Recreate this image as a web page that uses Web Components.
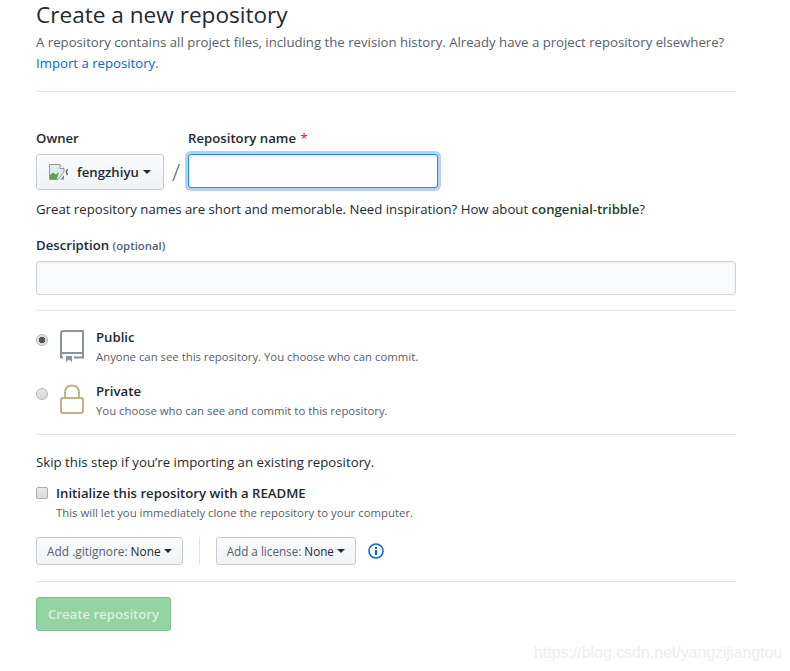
<!DOCTYPE html>
<html lang="en">

<head>
    <meta charset="UTF-8">
    <title>Create a new repository</title>
    <style>
        html, body {
            margin: 0;
            background: #fff;
            color: #24292e;
            font-family: "Open Sans", "Liberation Sans", sans-serif;
            font-size: 14px;
        }
    </style>
</head>

<body>
    <repo-form></repo-form>

    <script>
        class GhRule extends HTMLElement {
            constructor() {
                super();
                this.attachShadow({ mode: 'open' });
                this.shadowRoot.innerHTML = `
                <style>
                    :host { display: block; height: 1px; background: #e1e4e8; }
                </style>`;
            }
        }

        class GhSelect extends HTMLElement {
            constructor() {
                super();
                this.attachShadow({ mode: 'open' });
                this.shadowRoot.innerHTML = `
                <style>
                    :host {
                        display: inline-flex;
                        align-items: center;
                        box-sizing: border-box;
                        height: 28px;
                        padding: 0 10px;
                        gap: 3px;
                        border: 1px solid #c8ccd1;
                        border-radius: 3px;
                        background: linear-gradient(#fafbfc, #eff3f6);
                        font-size: 11.7px;
                        font-weight: 500;
                        color: #24292e;
                        white-space: nowrap;
                    }
                    .caret {
                        width: 0;
                        height: 0;
                        border: 4px solid transparent;
                        border-top-color: #24292e;
                        border-bottom-width: 0;
                    }
                    ::slotted(span) { color: #586069; font-weight: 400; }
                </style>
                <slot></slot><span class="caret"></span>`;
            }
        }

        class GhRadio extends HTMLElement {
            constructor() {
                super();
                this.attachShadow({ mode: 'open' });
                const checked = this.hasAttribute('checked');
                this.shadowRoot.innerHTML = `
                <style>
                    :host { display: flex; height: 54px; }
                    .radio {
                        box-sizing: border-box;
                        width: 12px;
                        height: 12px;
                        margin: 4px 12px 0 0;
                        border: 1px solid #b4b4b4;
                        border-radius: 50%;
                        background: ${checked ? 'radial-gradient(circle, #555 0 3px, #e4e4e4 3.6px)' : 'linear-gradient(#e8e8e8, #d8d8d8)'};
                    }
                    .icon { width: 24px; height: 32px; margin: 0 12px 0 0; }
                    .title { font-weight: 600; font-size: 13.2px; line-height: 16px; margin-top: -1px; }
                    .note { font-size: 11.35px; line-height: 16px; color: #586069; margin-top: 4px; white-space: nowrap; }
                </style>
                <div class="radio"></div>
                <div class="icon"><slot name="icon"></slot></div>
                <div>
                    <div class="title">${this.getAttribute('label')}</div>
                    <div class="note">${this.getAttribute('note')}</div>
                </div>`;
            }
        }

        class RepoForm extends HTMLElement {
            constructor() {
                super();
                this.attachShadow({ mode: 'open' });
                this.shadowRoot.innerHTML = `
                <style>
                    :host {
                        display: block;
                        position: relative;
                        box-sizing: border-box;
                        width: 790px;
                        height: 671px;
                        overflow: hidden;
                        padding-left: 36px;
                    }
                    .wrap { width: 700px; }
                    h1 {
                        margin: 0;
                        font-size: 22.6px;
                        font-weight: 400;
                        line-height: 30px;
                    }
                    .lead {
                        margin: 2px 0 17px;
                        font-size: 13.2px;
                        line-height: 21px;
                        color: #586069;
                        white-space: nowrap;
                    }
                    a { color: #0366d6; text-decoration: none; }
                    .lbl { font-weight: 600; font-size: 13.2px; line-height: 20px; display: block; white-space: nowrap; }
                    .names { display: flex; margin-top: 36px; }
                    .owner-box {
                        display: flex;
                        align-items: center;
                        box-sizing: border-box;
                        width: 128px;
                        height: 36px;
                        margin-top: 6px;
                        padding: 0 0 1px 12px;
                        border: 1px solid #c8ccd1;
                        border-radius: 3px;
                        background: linear-gradient(#fafbfc, #eff3f6);
                        font-weight: 600;
                        font-size: 13.2px;
                        white-space: nowrap;
                    }
                    .owner-box svg { margin-right: 8px; flex: none; }
                    .caret {
                        margin-left: 4px;
                        border: 4px solid transparent;
                        border-top-color: #24292e;
                        border-bottom-width: 0;
                    }
                    .slash { width: 24px; text-align: center; font-size: 24px; line-height: 36px; margin-top: 26px; color: #586069; font-weight: 300; }
                    .req { color: #cb2431; font-weight: 400; margin-left: 1px; }
                    .name-input {
                        box-sizing: border-box;
                        width: 250px;
                        height: 34px;
                        margin-top: 6px;
                        border: 1px solid #2188ff;
                        border-radius: 3px;
                        background: #fff;
                        box-shadow: 0 0 0 3px rgba(3, 102, 214, 0.3);
                    }
                    .hint { margin: 9px 0 0; font-size: 13.2px; line-height: 20px; white-space: nowrap; }
                    .hint b { font-weight: 600; color: #28402a; }
                    .desc { margin-top: 16px; }
                    .lbl small { font-size: 11.35px; color: #586069; }
                    .desc-input {
                        box-sizing: border-box;
                        height: 34px;
                        margin-top: 5px;
                        border: 1px solid #d1d5da;
                        border-radius: 3px;
                        background: #fafbfc;
                        box-shadow: inset 0 1px 2px rgba(27, 31, 35, 0.075);
                    }
                    .r1 { margin-top: 15px; }
                    .options { padding-top: 19px; }
                    .options gh-radio:last-child { height: 50px; }
                    .skip { margin: 17px 0 0; font-size: 13.25px; line-height: 20px; }
                    .readme { display: flex; margin-top: 11px; }
                    .check {
                        box-sizing: border-box;
                        width: 12px;
                        height: 12px;
                        margin: 4px 8px 0 0;
                        border: 1px solid #aaa;
                        border-radius: 2px;
                        background: linear-gradient(#eaeaea, #dcdcdc);
                    }
                    .readme .note { font-size: 11.38px; line-height: 16px; margin-top: 2px; color: #586069; white-space: nowrap; }
                    .picks { display: flex; align-items: center; margin-top: 16px; height: 28px; }
                    .sep { width: 1px; height: 28px; background: #e1e4e8; margin: 0 16px; }
                    .picks svg { margin-left: 12px; }
                    .ignore { font-size: 11.9px; }
                    .bottom { margin-top: 16px; }
                    .create {
                        display: flex;
                        align-items: center;
                        justify-content: center;
                        box-sizing: border-box;
                        width: 135px;
                        height: 34px;
                        margin-top: 15px;
                        border: 1px solid #7fbf91;
                        border-radius: 3px;
                        background: #94d3a2;
                        color: #d9f0de;
                        font-weight: 600;
                        font-size: 13.2px;
                    }
                    .mark {
                        position: absolute;
                        left: 534px;
                        top: 643px;
                        font-family: "Liberation Sans", sans-serif;
                        font-size: 15.9px;
                        line-height: 20px;
                        color: #eeeeee;
                        white-space: nowrap;
                    }
                </style>
                <div class="wrap">
                    <h1>Create a new repository</h1>
                    <p class="lead">A repository contains all project files, including the revision history. Already have a project repository elsewhere?<br><a>Import a repository</a>.</p>
                    <gh-rule></gh-rule>

                    <div class="names">
                        <div>
                            <div class="lbl">Owner</div>
                            <div class="owner-box">
                                <svg width="20" height="16" viewBox="0 0 20 16">
                                    <path d="M0.5 0.5H11L15 4.5V8L9 15.5H0.5Z" fill="#e3ebef" stroke="#8f9aa0"/>
                                    <path d="M1 15V11L4 8.5L7 10.5L10 8L8 15Z" fill="#5aa642"/>
                                    <path d="M11 15.5H15V11L12 15Z" fill="#5aa642"/>
                                    <path d="M11 .5V4.5H15" fill="#fff" stroke="#8f9aa0"/>
                                    <path d="M18.5 5Q16.5 8 18.5 11" fill="none" stroke="#555" stroke-width="1.2"/>
                                </svg>
                                fengzhiyu<span class="caret"></span>
                            </div>
                        </div>
                        <div class="slash">/</div>
                        <div>
                            <div class="lbl">Repository name <span class="req">*</span></div>
                            <div class="name-input"></div>
                        </div>
                    </div>
                    <p class="hint">Great repository names are short and memorable. Need inspiration? How about <b>congenial-tribble</b>?</p>

                    <div class="desc">
                        <div class="lbl">Description <small>(optional)</small></div>
                        <div class="desc-input"></div>
                    </div>
                    <gh-rule class="r1"></gh-rule>

                    <div class="options">
                        <gh-radio checked label="Public" note="Anyone can see this repository. You choose who can commit.">
                            <svg slot="icon" width="24" height="32" viewBox="0 0 24 32">
                                <path d="M3 27.5H1V3.5Q1 1 3.5 1H23V27.5H14" fill="none" stroke="#8a949c" stroke-width="2"/>
                                <path d="M1 24.5Q1 23 3 23H23" fill="none" stroke="#8a949c" stroke-width="2"/>
                                <path d="M6 26H12V32L9 29.5L6 32Z" fill="#8a949c"/>
                            </svg>
                        </gh-radio>
                        <gh-radio label="Private" note="You choose who can see and commit to this repository.">
                            <svg slot="icon" width="24" height="32" viewBox="0 0 24 32">
                                <path d="M5 14V8.5Q5 1.5 12 1.5T19 8.5V14" fill="none" stroke="#bfb28a" stroke-width="2"/>
                                <rect x="1" y="14" width="22" height="15" rx="2" fill="none" stroke="#bfb28a" stroke-width="2"/>
                            </svg>
                        </gh-radio>
                    </div>
                    <gh-rule></gh-rule>

                    <p class="skip">Skip this step if you’re importing an existing repository.</p>
                    <div class="readme">
                        <div class="check"></div>
                        <div>
                            <div class="lbl">Initialize this repository with a README</div>
                            <div class="note">This will let you immediately clone the repository to your computer.</div>
                        </div>
                    </div>
                    <div class="picks">
                        <gh-select class="ignore"><span>Add .gitignore:</span> None</gh-select>
                        <div class="sep"></div>
                        <gh-select><span>Add a license:</span> None</gh-select>
                        <svg width="16" height="16" viewBox="0 0 16 16">
                            <circle cx="8" cy="8" r="7" fill="none" stroke="#0366d6" stroke-width="1.6"/>
                            <rect x="7" y="7" width="2" height="5" fill="#0366d6"/>
                            <rect x="7" y="4" width="2" height="2" fill="#0366d6"/>
                        </svg>
                    </div>
                    <gh-rule class="bottom"></gh-rule>
                    <div class="create">Create repository</div>
                </div>
                <div class="mark">https://blog.csdn.net/yangzijiangtou</div>`;
            }
        }

        customElements.define('gh-rule', GhRule);
        customElements.define('gh-select', GhSelect);
        customElements.define('gh-radio', GhRadio);
        customElements.define('repo-form', RepoForm);
    </script>

</body>

</html>
